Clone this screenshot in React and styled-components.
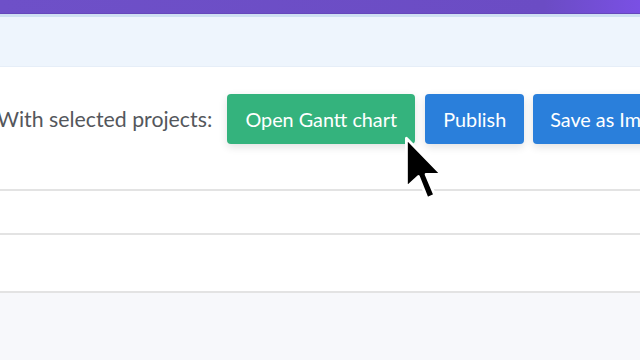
import styled, { createGlobalStyle } from "styled-components";

const GlobalStyle = createGlobalStyle`
  html, body {
    margin: 0;
    padding: 0;
    width: 640px;
    height: 360px;
    overflow: hidden;
    background: #f7f8fb;
    font-family: Lato, "Open Sans", sans-serif;
  }
  * { box-sizing: border-box; }
`;

const Page = styled.div`
  position: relative;
  width: 640px;
  height: 360px;
  display: flex;
  flex-direction: column;
  overflow: hidden;
`;

const TopBar = styled.div`
  height: 14px;
  flex: none;
  background: linear-gradient(90deg, #6e50c8 0%, #6b4cc4 85%, #7a50e4 100%);
  border-bottom: 1px solid #6547bb;
`;

const SubBar = styled.div`
  height: 53px;
  flex: none;
  background: #eef5fd;
  border-top: 3px solid #cfe0f2;
  border-bottom: 1px solid #e6eef8;
`;

const Content = styled.div`
  background: #fff;
  display: flex;
  flex-direction: column;
  flex: none;
`;

const Toolbar = styled.div`
  height: 122px;
  display: flex;
  align-items: flex-start;
  padding-top: 27px;
  margin-left: -3px;
  white-space: nowrap;
`;

const Label = styled.span`
  height: 50px;
  line-height: 50px;
  font-size: 21.3px;
  color: #54575c;
  margin-right: 15px;
`;

const Button = styled.button`
  flex: none;
  height: 50px;
  padding: 0;
  margin-right: ${(p) => p.$gap}px;
  border: none;
  border-radius: 4px;
  font-family: Lato, "Open Sans", sans-serif;
  font-size: 19.8px;
  color: #fff;
  background: ${(p) => (p.$green ? "#34b37d" : "#2a7fdb")};
  box-shadow: 0 3px 8px rgba(0, 0, 0, 0.12);
  width: ${(p) => p.$w}px;
  text-align: ${(p) => (p.$left ? "left" : "center")};
  padding-left: ${(p) => (p.$left ? 17 : 0)}px;
`;

const Row = styled.div`
  height: ${(p) => p.$h}px;
  border-top: 2px solid #e3e3e3;
  flex: none;
`;

const Cursor = styled.svg`
  position: absolute;
  left: 403px;
  top: 135px;
`;

export default function App() {
  return (
    <Page>
      <GlobalStyle />
      <TopBar />
      <SubBar />
      <Content>
        <Toolbar>
          <Label>With selected projects:</Label>
          <Button $green $w={188} $gap={10}>Open Gantt chart</Button>
          <Button $w={99} $gap={9}>Publish</Button>
          <Button $w={150} $gap={0} $left>Save as Image</Button>
        </Toolbar>
        <Row $h={44} />
        <Row $h={58} />
      </Content>
      <Row $h={80} />
      <Cursor width="44" height="70" viewBox="0 0 20 32">
        <path
          d="M1.5 1.5 L1.5 24 L7 19 L11 29 L14.5 27.5 L10.5 18 L17.5 18 Z"
          fill="#000"
          stroke="#fff"
          strokeWidth="1.3"
          strokeLinejoin="round"
        />
      </Cursor>
    </Page>
  );
}
